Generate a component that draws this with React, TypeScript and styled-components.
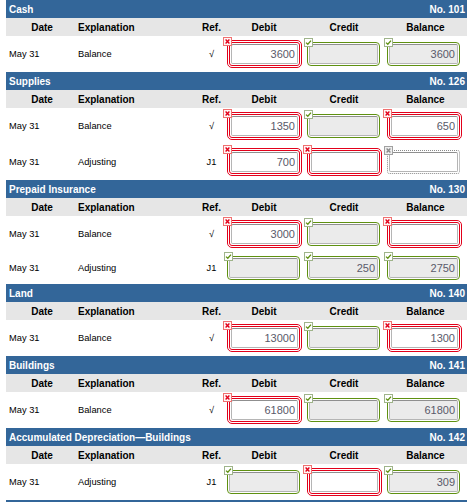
import React from 'react';
import styled, { createGlobalStyle, css } from 'styled-components';

const Global = createGlobalStyle`
  html, body { margin: 0; padding: 0; background: #fff; }
  body { font-family: "Liberation Sans", Arial, sans-serif; }
`;

type Status = 'red' | 'green' | 'grey';
type Field = { s: Status; v: string };
type RowData = { date: string; exp: string; ref: string; debit: Field; credit: Field; balance: Field };
type Section = { title: string; no: string; rows: RowData[] };

const sections: Section[] = [
  {
    title: 'Cash', no: 'No. 101', rows: [
      { date: 'May 31', exp: 'Balance', ref: '√', debit: { s: 'red', v: '3600' }, credit: { s: 'green', v: '' }, balance: { s: 'green', v: '3600' } },
    ],
  },
  {
    title: 'Supplies', no: 'No. 126', rows: [
      { date: 'May 31', exp: 'Balance', ref: '√', debit: { s: 'red', v: '1350' }, credit: { s: 'green', v: '' }, balance: { s: 'red', v: '650' } },
      { date: 'May 31', exp: 'Adjusting', ref: 'J1', debit: { s: 'red', v: '700' }, credit: { s: 'red', v: '' }, balance: { s: 'grey', v: '' } },
    ],
  },
  {
    title: 'Prepaid Insurance', no: 'No. 130', rows: [
      { date: 'May 31', exp: 'Balance', ref: '√', debit: { s: 'red', v: '3000' }, credit: { s: 'green', v: '' }, balance: { s: 'red', v: '' } },
      { date: 'May 31', exp: 'Adjusting', ref: 'J1', debit: { s: 'green', v: '' }, credit: { s: 'green', v: '250' }, balance: { s: 'green', v: '2750' } },
    ],
  },
  {
    title: 'Land', no: 'No. 140', rows: [
      { date: 'May 31', exp: 'Balance', ref: '√', debit: { s: 'red', v: '13000' }, credit: { s: 'green', v: '' }, balance: { s: 'red', v: '1300' } },
    ],
  },
  {
    title: 'Buildings', no: 'No. 141', rows: [
      { date: 'May 31', exp: 'Balance', ref: '√', debit: { s: 'red', v: '61800' }, credit: { s: 'green', v: '' }, balance: { s: 'green', v: '61800' } },
    ],
  },
  {
    title: 'Accumulated Depreciation—Buildings', no: 'No. 142', rows: [
      { date: 'May 31', exp: 'Adjusting', ref: 'J1', debit: { s: 'green', v: '' }, credit: { s: 'red', v: '' }, balance: { s: 'green', v: '309' } },
    ],
  },
];

const COLS = '72px 121px 25px 80px 80px 83px';

const Page = styled.div`
  margin: 0 6px;
  width: 461px;
`;

const TitleBar = styled.div`
  display: flex;
  justify-content: space-between;
  align-items: center;
  height: 18px;
  padding: 0 2px 0 3px;
  background: #336699;
  color: #fff;
  font-weight: bold;
  font-size: 10px;
`;

const HeadRow = styled.div`
  display: grid;
  grid-template-columns: ${COLS};
  height: 18px;
  align-items: center;
  background: #e6e6e6;
  font-weight: bold;
  font-size: 10px;
  color: #000;
`;

const HeadCell = styled.div<{ $align?: 'left' | 'center' }>`
  text-align: ${p => p.$align || 'center'};
`;

const DataRow = styled.div`
  display: grid;
  grid-template-columns: ${COLS};
  align-items: center;
  font-size: 9.3px;
  color: #000;
`;

const TextCell = styled.div<{ $align?: 'left' | 'center'; $pad?: number }>`
  text-align: ${p => p.$align || 'left'};
  padding-left: ${p => p.$pad || 0}px;
`;

const InputCell = styled.div`
  display: flex;
  align-items: center;
  padding: 4px 0 4px 3px;
`;

const Box = styled.div<{ $s: Status }>`
  position: relative;
  box-sizing: border-box;
  padding: 1px;
  background: #fff;
  ${p => p.$s === 'red' && css`
    width: 75px;
    border: 1px solid #e2001a;
    border-radius: 5px;
  `}
  ${p => p.$s === 'green' && css`
    width: 73px;
    border: 1px solid #5f9111;
    border-radius: 4px;
  `}
  ${p => p.$s === 'grey' && css`
    width: 73px;
    border: 1px dotted #8a8a8a;
    border-radius: 3px;
  `}
`;

const Inner = styled.div`
  border: 1px solid #e2001a;
  border-radius: 3px;
  padding: 1px;
`;

const Field = styled.input<{ $s: Status }>`
  display: block;
  box-sizing: border-box;
  width: 100%;
  height: 20px;
  margin: 0;
  padding: 0 2px 0 0;
  border: 1px solid #b5b5b5;
  border-top-color: #8f8f8f;
  border-radius: 2px;
  background: ${p => (p.$s === 'green' ? '#ebebeb' : '#fff')};
  color: #5a5a6a;
  font-family: "Liberation Sans", Arial, sans-serif;
  font-size: 11px;
  text-align: right;
  outline: none;
`;

const Mark = styled.span<{ $s: Status }>`
  position: absolute;
  top: ${p => (p.$s === 'red' ? -4 : -5)}px;
  left: ${p => (p.$s === 'red' ? -5 : -4)}px;
  width: 9px;
  height: 9px;
  display: block;
  line-height: 0;
`;

function MarkIcon({ s }: { s: Status }) {
  if (s === 'green') {
    return (
      <svg width="9" height="9" viewBox="0 0 9 9">
        <rect x="0.5" y="0.5" width="8" height="8" fill="#fff" stroke="#9fb48a" />
        <path d="M2 4.6 L3.8 6.3 L7 2.6" fill="none" stroke="#5f9111" strokeWidth="1.3" />
      </svg>
    );
  }
  const c = s === 'red' ? '#e2001a' : '#8a8a8a';
  return (
    <svg width="9" height="9" viewBox="0 0 9 9">
      <rect x="0.5" y="0.5" width="8" height="8" fill={s === 'red' ? '#fff5f5' : '#eeeeee'} stroke={s === 'red' ? '#f07070' : '#a0a0a0'} />
      <path d="M2.6 2.6 L6.4 6.4 M6.4 2.6 L2.6 6.4" stroke={c} strokeWidth="1.4" />
    </svg>
  );
}

function Input({ f }: { f: Field }) {
  const field = <Field $s={f.s} readOnly value={f.v} />;
  return (
    <InputCell>
      <Box $s={f.s}>
        {f.s === 'red' ? <Inner>{field}</Inner> : field}
        <Mark $s={f.s}><MarkIcon s={f.s} /></Mark>
      </Box>
    </InputCell>
  );
}

export default function App() {
  return (
    <>
      <Global />
      <Page>
        {sections.map(sec => (
          <div key={sec.title}>
            <TitleBar>
              <span>{sec.title}</span>
              <span>{sec.no}</span>
            </TitleBar>
            <HeadRow>
              <HeadCell>Date</HeadCell>
              <HeadCell $align="left">Explanation</HeadCell>
              <HeadCell>Ref.</HeadCell>
              <HeadCell>Debit</HeadCell>
              <HeadCell>Credit</HeadCell>
              <HeadCell>Balance</HeadCell>
            </HeadRow>
            {sec.rows.map((r, i) => (
              <DataRow key={i}>
                <TextCell $pad={3}>{r.date}</TextCell>
                <TextCell>{r.exp}</TextCell>
                <TextCell $align="center">{r.ref}</TextCell>
                <Input f={r.debit} />
                <Input f={r.credit} />
                <Input f={r.balance} />
              </DataRow>
            ))}
          </div>
        ))}
        <TitleBar />
      </Page>
    </>
  );
}
